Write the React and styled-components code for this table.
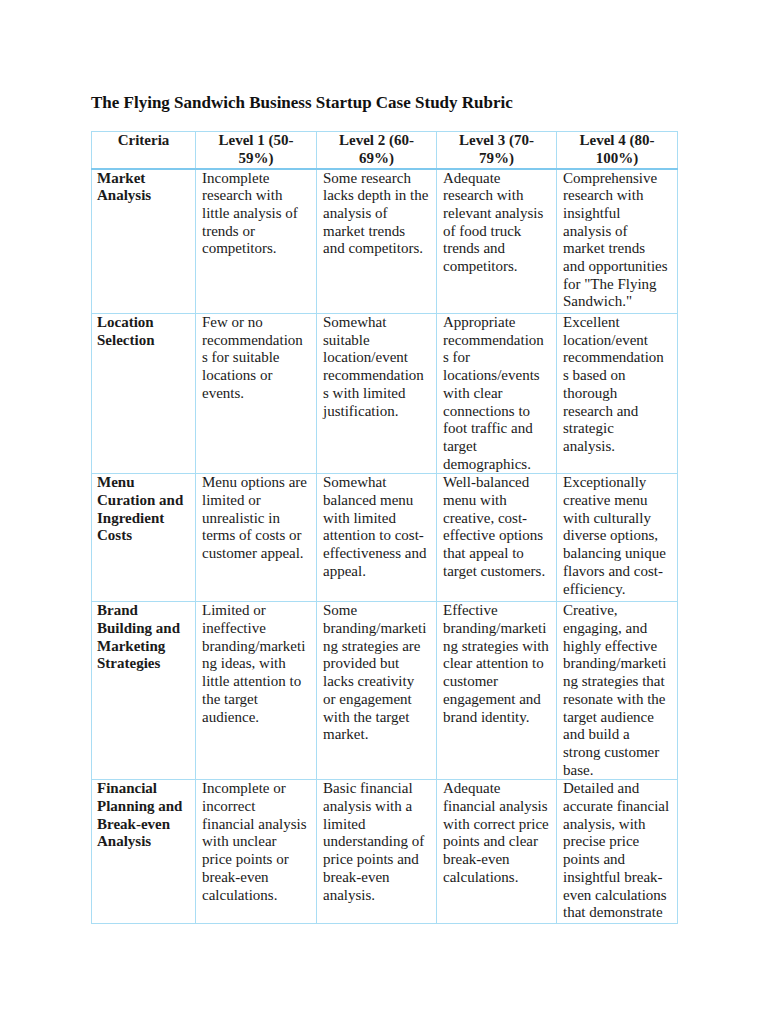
import React from 'react';
import styled, { createGlobalStyle } from 'styled-components';

const GlobalStyle = createGlobalStyle`
  body {
    margin: 0;
    background: #ffffff;
    font-family: 'Liberation Serif', 'Times New Roman', serif;
    color: #1a1a1a;
  }
`;

const Page = styled.div`
  width: 768px;
  height: 1024px;
  box-sizing: border-box;
  padding: 93px 91px 0;
  background: #ffffff;
`;

const Title = styled.h1`
  margin: 0 0 18px;
  font-size: 17px;
  line-height: 20px;
  font-weight: bold;
  color: #111111;
`;

const Rubric = styled.table`
  width: 587px;
  border-collapse: collapse;
  table-layout: fixed;
  font-size: 15px;
  line-height: 17.7px;
`;

const Row = styled.tr`
  height: ${(p) => p.$h}px;
`;

const HeadCell = styled.th`
  border: 1px solid #a9ddf4;
  border-bottom: 2px solid #7fc9ee;
  padding: 0 2px;
  text-align: center;
  vertical-align: top;
  font-weight: bold;
  white-space: nowrap;
`;

const Cell = styled.td`
  border: 1px solid #a9ddf4;
  padding: 0 0 0 ${(p) => (p.$first ? 5 : 6)}px;
  vertical-align: top;
  font-weight: ${(p) => (p.$first ? 'bold' : 'normal')};
  white-space: nowrap;
  overflow: hidden;
`;

const Line = styled.div``;

const columns = [104, 121, 120, 120, 121];

const header = [
  ['Criteria'],
  ['Level 1 (50-', '59%)'],
  ['Level 2 (60-', '69%)'],
  ['Level 3 (70-', '79%)'],
  ['Level 4 (80-', '100%)'],
];

const rows = [
  {
    h: 145,
    cells: [
      ['Market', 'Analysis'],
      ['Incomplete', 'research with', 'little analysis of', 'trends or', 'competitors.'],
      ['Some research', 'lacks depth in the', 'analysis of', 'market trends', 'and competitors.'],
      ['Adequate', 'research with', 'relevant analysis', 'of food truck', 'trends and', 'competitors.'],
      ['Comprehensive', 'research with', 'insightful', 'analysis of', 'market trends', 'and opportunities', 'for "The Flying', 'Sandwich."'],
    ],
  },
  {
    h: 157,
    cells: [
      ['Location', 'Selection'],
      ['Few or no', 'recommendation', 's for suitable', 'locations or', 'events.'],
      ['Somewhat', 'suitable', 'location/event', 'recommendation', 's with limited', 'justification.'],
      ['Appropriate', 'recommendation', 's for', 'locations/events', 'with clear', 'connections to', 'foot traffic and', 'target', 'demographics.'],
      ['Excellent', 'location/event', 'recommendation', 's based on', 'thorough', 'research and', 'strategic', 'analysis.'],
    ],
  },
  {
    h: 128,
    cells: [
      ['Menu', 'Curation and', 'Ingredient', 'Costs'],
      ['Menu options are', 'limited or', 'unrealistic in', 'terms of costs or', 'customer appeal.'],
      ['Somewhat', 'balanced menu', 'with limited', 'attention to cost-', 'effectiveness and', 'appeal.'],
      ['Well-balanced', 'menu with', 'creative, cost-', 'effective options', 'that appeal to', 'target customers.'],
      ['Exceptionally', 'creative menu', 'with culturally', 'diverse options,', 'balancing unique', 'flavors and cost-', 'efficiency.'],
    ],
  },
  {
    h: 178,
    cells: [
      ['Brand', 'Building and', 'Marketing', 'Strategies'],
      ['Limited or', 'ineffective', 'branding/marketi', 'ng ideas, with', 'little attention to', 'the target', 'audience.'],
      ['Some', 'branding/marketi', 'ng strategies are', 'provided but', 'lacks creativity', 'or engagement', 'with the target', 'market.'],
      ['Effective', 'branding/marketi', 'ng strategies with', 'clear attention to', 'customer', 'engagement and', 'brand identity.'],
      ['Creative,', 'engaging, and', 'highly effective', 'branding/marketi', 'ng strategies that', 'resonate with the', 'target audience', 'and build a', 'strong customer', 'base.'],
    ],
  },
  {
    h: 144,
    cells: [
      ['Financial', 'Planning and', 'Break-even', 'Analysis'],
      ['Incomplete or', 'incorrect', 'financial analysis', 'with unclear', 'price points or', 'break-even', 'calculations.'],
      ['Basic financial', 'analysis with a', 'limited', 'understanding of', 'price points and', 'break-even', 'analysis.'],
      ['Adequate', 'financial analysis', 'with correct price', 'points and clear', 'break-even', 'calculations.'],
      ['Detailed and', 'accurate financial', 'analysis, with', 'precise price', 'points and', 'insightful break-', 'even calculations', 'that demonstrate'],
    ],
  },
];

const Lines = ({ lines }) => lines.map((l, i) => <Line key={i}>{l}</Line>);

const App = () => (
  <Page>
    <GlobalStyle />
    <Title>The Flying Sandwich Business Startup Case Study Rubric</Title>
    <Rubric>
      <colgroup>
        {columns.map((w, i) => (
          <col key={i} style={{ width: w }} />
        ))}
      </colgroup>
      <thead>
        <Row $h={37}>
          {header.map((lines, i) => (
            <HeadCell key={i}>
              <Lines lines={lines} />
            </HeadCell>
          ))}
        </Row>
      </thead>
      <tbody>
        {rows.map((row, r) => (
          <Row key={r} $h={row.h}>
            {row.cells.map((lines, c) => (
              <Cell key={c} $first={c === 0}>
                <Lines lines={lines} />
              </Cell>
            ))}
          </Row>
        ))}
      </tbody>
    </Rubric>
  </Page>
);

export default App;
